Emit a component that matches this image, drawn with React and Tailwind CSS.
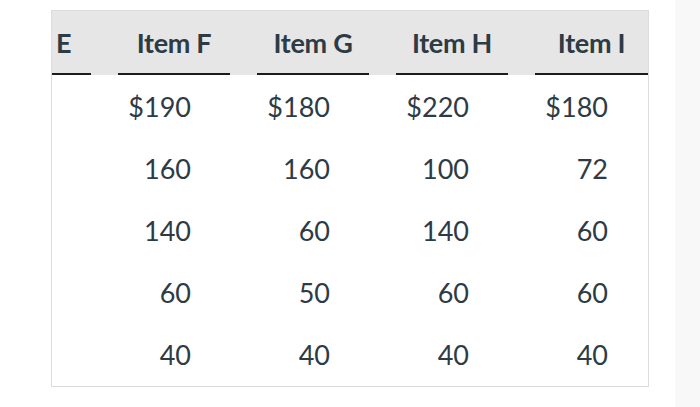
import React from "react";

const items = ["Item F", "Item G", "Item H", "Item I"];

const rows = [
  ["$190", "$180", "$220", "$180"],
  ["160", "160", "100", "72"],
  ["140", "60", "140", "60"],
  ["60", "50", "60", "60"],
  ["40", "40", "40", "40"],
];

export default function App() {
  return (
    <div className="w-[700px] h-[407px] bg-white flex font-['Lato','Noto_Sans',sans-serif] text-[#2d3b45] overflow-hidden">
      <div className="w-[675px] h-full">
        {/* Table card */}
        <div className="ml-[51px] mt-[10px] w-[598px] h-[377px] border border-[#dcdcdc] flex flex-col">
          {/* Header */}
          <div className="bg-[#e6e6e6] flex gap-[27px] h-[64px]">
            <div className="w-[39px] border-b-2 border-[#1c1c1c] flex items-center pl-[4px] text-[27px] font-bold leading-none">
              E
            </div>
            {items.map((label, i) => (
              <div
                key={label}
                className={`${i === 3 ? "flex-1" : "w-[112px]"} border-b-2 border-[#1c1c1c] flex items-center justify-center text-[27px] font-bold leading-none tracking-[-0.3px]`}
              >
                {label}
              </div>
            ))}
          </div>

          {/* Body */}
          {rows.map((row, r) => (
            <div key={r} className="flex gap-[27px] h-[62.2px]">
              <div className="w-[39px]" />
              {row.map((val, i) => (
                <div
                  key={i}
                  className={`${i === 3 ? "flex-1 pr-[40px]" : "w-[112px] pr-[39px]"} flex items-center justify-end text-[27px] leading-none`}
                >
                  {val}
                </div>
              ))}
            </div>
          ))}
        </div>
      </div>
      <div className="flex-1 h-full bg-[#f8f8f8]" />
    </div>
  );
}
